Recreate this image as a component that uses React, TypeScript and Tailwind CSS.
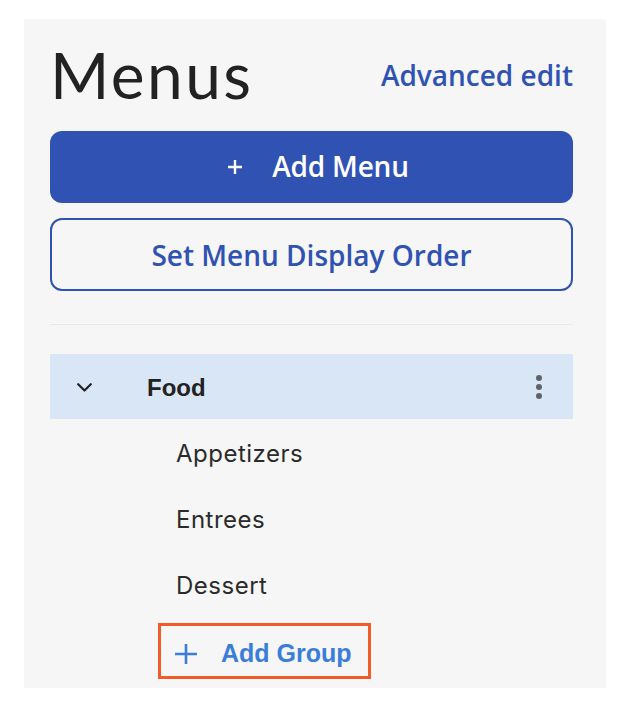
import React from "react";

const groups = ["Appetizers", "Entrees", "Dessert"];

export default function App() {
  return (
    <div className="w-[628px] h-[716px] bg-white pt-[19px] pl-[24px]">
      <div className="w-[582px] h-[669px] bg-[#f6f6f6] pt-[24px] pl-[26px] pr-[33px] flex flex-col">
        {/* Header */}
        <div className="flex items-start justify-between">
          <h1 className="font-['Lato',sans-serif] text-[64px] leading-[64px] font-normal text-[#222222] tracking-[2.4px]">
            Menus
          </h1>
          <a className="mt-[18px] font-['Open_Sans',sans-serif] font-semibold text-[28px] leading-[28px] text-[#3052b3]">
            Advanced edit
          </a>
        </div>

        {/* Add Menu */}
        <button className="mt-6 h-[72px] w-full rounded-[12px] bg-[#3052b3] flex items-center justify-center pl-[13px] pb-[2px]">
          <svg width="16" height="16" viewBox="0 0 16 16" className="mt-[1px]">
            <path d="M8 1v14M1 8h14" stroke="white" strokeWidth="2.4" fill="none" />
          </svg>
          <span className="ml-[29px] font-['Open_Sans',sans-serif] font-semibold text-[28px] leading-[28px] text-white tracking-[-0.2px]">
            Add Menu
          </span>
        </button>

        {/* Set Menu Display Order */}
        <button className="mt-[15px] h-[73px] w-full rounded-[12px] border-2 border-[#3052b3] flex items-center justify-center">
          <span className="font-['Open_Sans',sans-serif] font-semibold text-[28px] leading-[28px] text-[#3052b3]">
            Set Menu Display Order
          </span>
        </button>

        {/* Divider */}
        <div className="mt-[33px] h-px w-full bg-[#e9e9e9]" />

        {/* Food row */}
        <div className="mt-[29px] h-[65px] bg-[#d9e6f6] flex items-center">
          <div className="w-[27px]" />
          <svg width="15" height="9" viewBox="0 0 15 9" className="mt-[2px]">
            <path d="M1.2 1.2L7.5 7.5L13.8 1.2" stroke="#222" strokeWidth="2.2" fill="none" strokeLinecap="round" strokeLinejoin="round" />
          </svg>
          <span className="ml-[55px] font-['Liberation_Sans',Arial,sans-serif] font-bold text-[24px] leading-[24px] text-[#222222] mt-[2px]">
            Food
          </span>
          <div className="flex-1" />
          <div className="mr-[31px] flex flex-col gap-[3.3px] mt-[1px]">
            <span className="block w-[6px] h-[6px] rounded-full bg-[#5f6368]" />
            <span className="block w-[6px] h-[6px] rounded-full bg-[#5f6368]" />
            <span className="block w-[6px] h-[6px] rounded-full bg-[#5f6368]" />
          </div>
        </div>

        {/* Groups */}
        <div className="mt-[2px] flex flex-col">
          {groups.map((g) => (
            <div key={g} className="h-[66px] flex items-center pl-[126px]">
              <span className="font-['Inter',sans-serif] text-[24px] text-[#2b2b2b] tracking-[0.5px]">
                {g}
              </span>
            </div>
          ))}
        </div>

        {/* Add Group */}
        <div className="mt-[4px] ml-[108px] w-[213px] h-[56px] border-[3px] border-[#f15a29] flex items-center pl-[14px] pt-[5px]">
          <svg width="22" height="20" viewBox="0 0 22 20">
            <path d="M11 0v20M0 10h22" stroke="#3a7ddb" strokeWidth="2.6" fill="none" />
          </svg>
          <span className="ml-[24px] font-['Liberation_Sans',Arial,sans-serif] font-bold text-[25px] leading-[25px] text-[#3a7ddb]">
            Add Group
          </span>
        </div>
      </div>
    </div>
  );
}
